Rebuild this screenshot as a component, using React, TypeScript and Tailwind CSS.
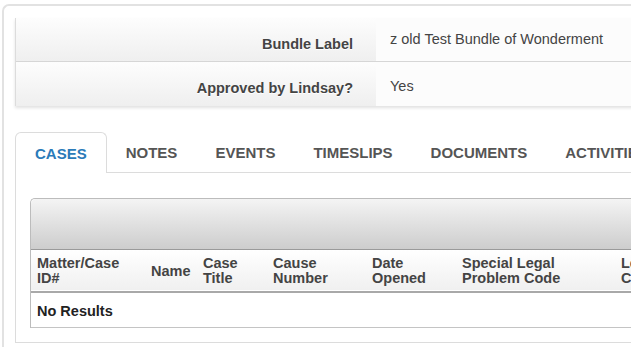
import React from 'react';

const details = [
  { label: 'Bundle Label', value: 'z old Test Bundle of Wonderment' },
  { label: 'Approved by Lindsay?', value: 'Yes' },
];

const tabs = ['Cases', 'Notes', 'Events', 'Timeslips', 'Documents', 'Activities', 'Other'];

const columns = [
  { label: ['Matter/Case', 'ID#'], width: 'w-[114px]' },
  { label: ['Name'], width: 'w-[52px]' },
  { label: ['Case', 'Title'], width: 'w-[70px]' },
  { label: ['Cause', 'Number'], width: 'w-[99px]' },
  { label: ['Date', 'Opened'], width: 'w-[90px]' },
  { label: ['Special Legal', 'Problem Code'], width: 'w-[159px]' },
  { label: ['Legal', 'Category'], width: 'w-[110px]' },
];

export default function App() {
  return (
    <div
      className="w-[631px] h-[347px] overflow-hidden bg-white text-[#444]"
      style={{ fontFamily: '"Liberation Sans", Arial, sans-serif' }}
    >
      {/* Outer page container */}
      <div className="ml-[2px] mt-[4px] w-[900px] min-h-[400px] border-l-2 border-t-2 border-[#e2e2e2] rounded-tl-[7px] pl-[11px] pt-[12px]">
        {/* Detail rows */}
        <div className="border-l border-[#dcdcdc] shadow-[0_2px_3px_rgba(0,0,0,0.12)]">
          {details.map((d, i) => (
            <div key={i} className={`flex h-[44px] ${i === 0 ? 'border-b border-[#d6d6d6]' : ''}`}>
              <div className="w-[360px] flex items-center justify-end pr-[23px] pt-[10px] font-bold text-[14.5px] bg-gradient-to-b from-[#fdfdfd] to-[#efefef] [text-shadow:0_1px_0_#fff]">
                {d.label}
              </div>
              <div className={`flex-1 flex items-center pl-[14px] text-[14.5px] bg-[#fcfcfc] ${i === 0 ? 'pt-[1px]' : 'pt-[5px]'}`}>
                {d.value}
              </div>
            </div>
          ))}
        </div>

        {/* Tabs */}
        <div className="mt-[26px] flex items-end border-b border-[#dcdcdc] h-[41px]">
          {tabs.map((t, i) => (
            <div
              key={t}
              className={`px-[19px] flex items-center pt-[2px] uppercase font-bold text-[15px] whitespace-nowrap ${
                i === 0
                  ? 'h-[41px] text-[#2b7bb9] border border-b-0 border-[#dcdcdc] rounded-t-[6px] bg-white -mb-px'
                  : 'h-[40px] text-[#555]'
              }`}
            >
              {t}
            </div>
          ))}
        </div>

        {/* Tab panel */}
        <div className="border-l border-b border-[#dcdcdc] pl-[14px] pt-[25px] pb-[14px]">
          <div className="border-l border-t border-[#bcbcbc] rounded-tl-[5px]">
            <div className="h-[51px] rounded-tl-[5px] bg-gradient-to-b from-[#f4f4f4] to-[#cdcdcd] border-b border-[#9a9a9a]" />
            <table className="border-collapse table-fixed text-left">
              <thead>
                <tr className="bg-gradient-to-b from-[#ffffff] to-[#f0f0f0] border-b-2 border-[#a9a9a9]">
                  {columns.map((c, i) => (
                    <th
                      key={i}
                      className={`${c.width} h-[42px] px-[6px] pt-[1px] align-middle font-bold text-[14.5px] leading-[15px] text-[#444]`}
                    >
                      {c.label.map((l, j) => (
                        <div key={j} className="whitespace-nowrap">{l}</div>
                      ))}
                    </th>
                  ))}
                </tr>
              </thead>
              <tbody>
                <tr className="border-b border-[#c4c4c4]">
                  <td colSpan={columns.length} className="h-[35px] px-[6px] pt-[4px] font-bold text-[14.5px] text-[#222]">
                    No Results
                  </td>
                </tr>
              </tbody>
            </table>
          </div>
        </div>
      </div>
    </div>
  );
}
